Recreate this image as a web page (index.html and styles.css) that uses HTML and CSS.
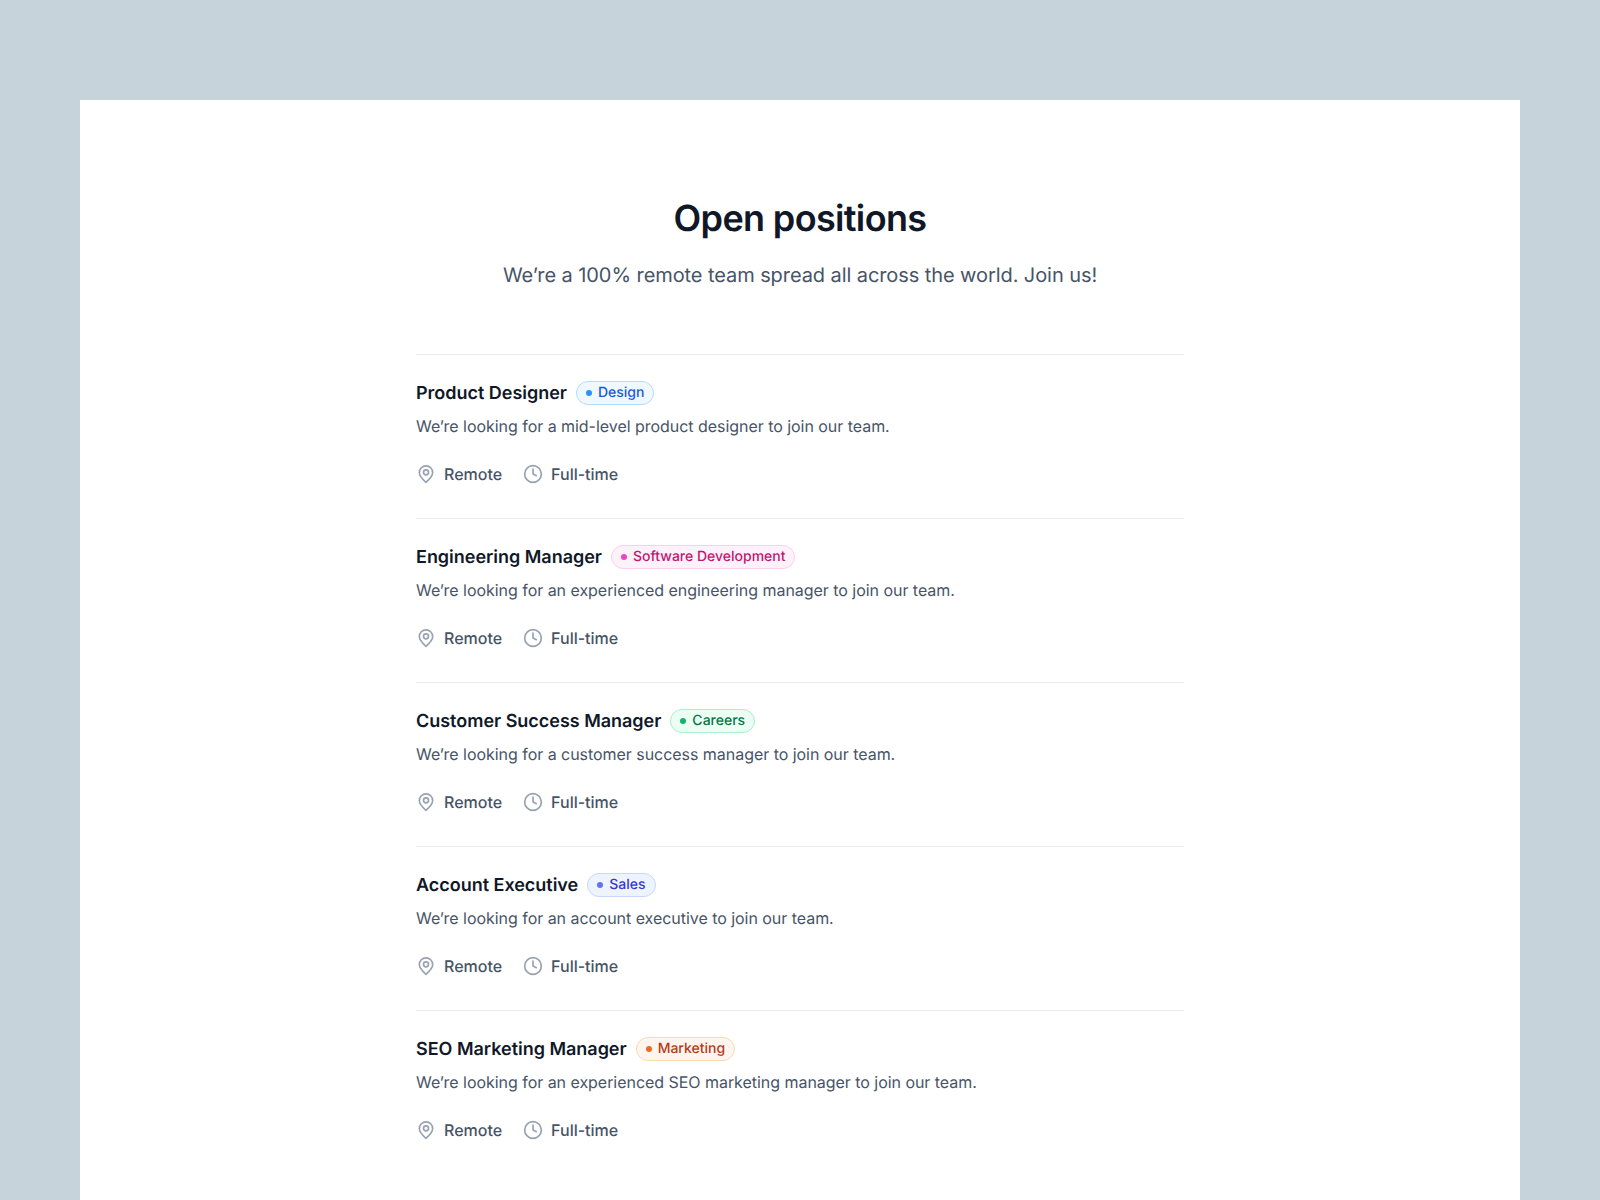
FILE: index.html
```html
<!DOCTYPE html>
<html lang="en">
<head>
    <meta charset="UTF-8">
    <title>Open positions</title>
    <link rel="stylesheet" href="styles.css">
</head>
<body>
    <svg class="sprites" width="0" height="0">
        <symbol id="pin" viewBox="0 0 20 20">
            <path d="M10 18.33c3.75-3.33 6.67-6.1 6.67-9.83a6.67 6.67 0 0 0-13.34 0c0 3.73 2.92 6.5 6.67 9.83Z" fill="none" stroke="currentColor" stroke-width="1.67" stroke-linecap="round" stroke-linejoin="round"/>
            <circle cx="10" cy="8.33" r="2.5" fill="none" stroke="currentColor" stroke-width="1.67"/>
        </symbol>
        <symbol id="clock" viewBox="0 0 20 20">
            <circle cx="10" cy="10" r="8.33" fill="none" stroke="currentColor" stroke-width="1.67"/>
            <path d="M10 5v5l3.33 1.67" fill="none" stroke="currentColor" stroke-width="1.67" stroke-linecap="round" stroke-linejoin="round"/>
        </symbol>
    </svg>

    <main class="panel">
        <header class="intro">
            <h1>Open positions</h1>
            <p>We’re a 100% remote team spread all across the world. Join us!</p>
        </header>

        <div class="jobs">
            <article class="job">
                <div class="job-head">
                    <h2>Product Designer</h2>
                    <span class="tag tag-blue"><i></i>Design</span>
                </div>
                <p class="job-desc">We’re looking for a mid-level product designer to join our team.</p>
                <div class="job-meta">
                    <span class="meta-item"><svg><use href="#pin"/></svg>Remote</span>
                    <span class="meta-item"><svg><use href="#clock"/></svg>Full-time</span>
                </div>
            </article>

            <article class="job">
                <div class="job-head">
                    <h2>Engineering Manager</h2>
                    <span class="tag tag-pink"><i></i>Software Development</span>
                </div>
                <p class="job-desc">We’re looking for an experienced engineering manager to join our team.</p>
                <div class="job-meta">
                    <span class="meta-item"><svg><use href="#pin"/></svg>Remote</span>
                    <span class="meta-item"><svg><use href="#clock"/></svg>Full-time</span>
                </div>
            </article>

            <article class="job">
                <div class="job-head">
                    <h2>Customer Success Manager</h2>
                    <span class="tag tag-green"><i></i>Careers</span>
                </div>
                <p class="job-desc">We’re looking for a customer success manager to join our team.</p>
                <div class="job-meta">
                    <span class="meta-item"><svg><use href="#pin"/></svg>Remote</span>
                    <span class="meta-item"><svg><use href="#clock"/></svg>Full-time</span>
                </div>
            </article>

            <article class="job">
                <div class="job-head">
                    <h2>Account Executive</h2>
                    <span class="tag tag-indigo"><i></i>Sales</span>
                </div>
                <p class="job-desc">We’re looking for an account executive to join our team.</p>
                <div class="job-meta">
                    <span class="meta-item"><svg><use href="#pin"/></svg>Remote</span>
                    <span class="meta-item"><svg><use href="#clock"/></svg>Full-time</span>
                </div>
            </article>

            <article class="job">
                <div class="job-head">
                    <h2>SEO Marketing Manager</h2>
                    <span class="tag tag-orange"><i></i>Marketing</span>
                </div>
                <p class="job-desc">We’re looking for an experienced SEO marketing manager to join our team.</p>
                <div class="job-meta">
                    <span class="meta-item"><svg><use href="#pin"/></svg>Remote</span>
                    <span class="meta-item"><svg><use href="#clock"/></svg>Full-time</span>
                </div>
            </article>
        </div>
    </main>
</body>
</html>
```

FILE: styles.css
```css
html, body {
    height: 100%;
}
body {
    margin: 0;
    padding: 100px 80px 0;
    box-sizing: border-box;
    overflow: hidden;
    background: #c7d3da;
    font-family: Inter, "Liberation Sans", sans-serif;
    text-rendering: geometricPrecision;
    color: #101828;
}
.sprites {
    position: absolute;
}
.panel {
    background: white;
    height: 100%;
    padding-top: 96px;
    box-sizing: border-box;
}
.intro {
    text-align: center;
    margin-bottom: 64px;
}
.intro h1 {
    margin: 0 0 20px;
    font-size: 36px;
    line-height: 44px;
    font-weight: 600;
    letter-spacing: -0.65px;
}
.intro p {
    margin: 0;
    font-size: 20px;
    line-height: 30px;
    letter-spacing: -0.08px;
    color: #475467;
}
.jobs {
    width: 768px;
    margin: 0 auto;
}
.job {
    border-top: 1px solid #eaecf0;
    padding: 24px 0 32px;
}
.job-head {
    display: flex;
    align-items: center;
    gap: 9px;
    height: 28px;
}
.job-head h2 {
    margin: 0;
    padding-top: 1px;
    font-size: 18px;
    line-height: 28px;
    font-weight: 600;
    letter-spacing: -0.02px;
}
.job-desc {
    margin: 7px 0 24px;
    font-size: 16px;
    line-height: 24px;
    letter-spacing: -0.04px;
    color: #475467;
}
.job-meta {
    display: flex;
    gap: 21px;
}
.meta-item {
    display: flex;
    align-items: center;
    gap: 8px;
    font-size: 16px;
    line-height: 24px;
    font-weight: 500;
    color: #475467;
}
.meta-item svg {
    width: 20px;
    height: 20px;
    color: #98a2b3;
}
.tag {
    display: flex;
    align-items: center;
    gap: 5px;
    margin-top: -1px;
    padding: 1px 9px 1px 8px;
    border: 1px solid;
    border-radius: 16px;
    font-size: 14px;
    line-height: 20px;
    font-weight: 500;
}
.tag i {
    width: 6px;
    height: 6px;
    margin: 0 1px;
    border-radius: 50%;
}
.tag-blue { background: #eff8ff; border-color: #b2ddff; color: #175cd3; }
.tag-blue i { background: #2e90fa; }
.tag-pink { background: #fdf2fa; border-color: #fcceee; color: #c11574; }
.tag-pink i { background: #ee46bc; }
.tag-green { background: #ecfdf3; border-color: #abefc6; color: #067647; }
.tag-green i { background: #17b26a; }
.tag-indigo { background: #eef4ff; border-color: #c7d7fe; color: #3538cd; }
.tag-indigo i { background: #6172f3; }
.tag-orange { background: #fef6ee; border-color: #f9dbaf; color: #b93815; }
.tag-orange i { background: #ef6820; }
```
